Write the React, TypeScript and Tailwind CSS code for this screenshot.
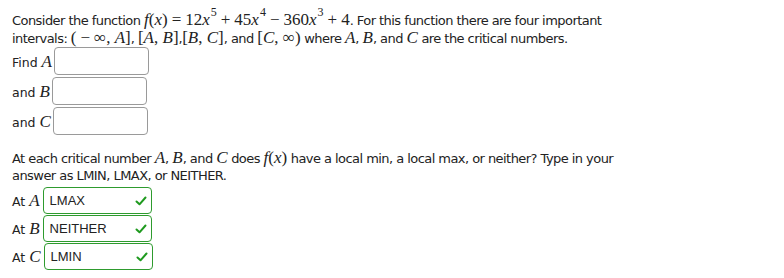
import React from "react";

const V = ({ children }: { children: React.ReactNode }) => <span className="italic">{children}</span>;

const M = ({ children }: { children: React.ReactNode }) => (
  <span className="font-['Liberation_Serif',serif] text-[17px] tracking-normal leading-none">{children}</span>
);

const Op = ({ children }: { children: React.ReactNode }) => <span className="mx-[4px]">{children}</span>;

const Sup = ({ children }: { children: React.ReactNode }) => (
  <sup className="text-[12px] top-[-0.75em] ml-[1px]">{children}</sup>
);

const Check = () => (
  <svg width="12" height="10" viewBox="0 0 12 10" className="shrink-0">
    <path d="M1.5 5.5 L4.5 8.3 L10.5 1.5" fill="none" stroke="#1f9a1f" strokeWidth="2" strokeLinecap="round" strokeLinejoin="round" />
  </svg>
);

const EmptyBox = () => <div className="w-[95px] h-[28px] border border-[#9a9a9a] rounded-[4px] bg-white" />;

const GreenBox = ({ value }: { value: string }) => (
  <div className="w-[109px] h-[27px] border border-[#2e9b2e] rounded-[4px] bg-white flex items-center justify-between pl-[6px] pr-[4px]">
    <span className="font-['Liberation_Sans',Arial,sans-serif] text-[13px] text-[#222] tracking-normal">{value}</span>
    <Check />
  </div>
);

const Label = ({ children }: { children: React.ReactNode }) => (
  <span className="text-[12.5px] tracking-normal leading-none">{children}</span>
);

const Line = ({ children }: { children: React.ReactNode }) => (
  <div className="h-[18px] leading-[18px] whitespace-nowrap">{children}</div>
);

export default function App() {
  return (
    <div className="w-[784px] h-[278px] bg-white text-[#222] font-['DejaVu_Sans','Verdana',sans-serif] text-[13px] tracking-[-0.55px] pl-[12px] pt-[11px]">
      <div>
        <Line>
          Consider the function{" "}
          <M>
            <V>f</V>(<V>x</V>)<Op>=</Op>12<V>x</V>
            <Sup>5</Sup>
            <Op>+</Op>45<V>x</V>
            <Sup>4</Sup>
            <Op>−</Op>360<V>x</V>
            <Sup>3</Sup>
            <Op>+</Op>4
          </M>
          . For this function there are four important
        </Line>
        <Line>
          intervals: <M>(<Op>−</Op>∞, <V>A</V>]</M>, <M>[<V>A</V>, <V>B</V>]</M>,<M>[<V>B</V>, <V>C</V>]</M>, and{" "}
          <M>[<V>C</V>, ∞)</M> where <M><V>A</V></M>, <M><V>B</V></M>, and <M><V>C</V></M> are the critical numbers.
        </Line>
      </div>

      <div className="flex flex-col gap-[2px]">
        <div className="flex items-center gap-[2px] h-[28px]">
          <Label>Find <M><V>A</V></M></Label>
          <EmptyBox />
        </div>
        <div className="flex items-center gap-[2px] h-[28px]">
          <Label>and <M><V>B</V></M></Label>
          <EmptyBox />
        </div>
        <div className="flex items-center gap-[2px] h-[28px]">
          <Label>and <M><V>C</V></M></Label>
          <EmptyBox />
        </div>
      </div>

      <div className="mt-[14px]">
        <Line>
          At each critical number <M><V>A</V></M>, <M><V>B</V></M>, and <M><V>C</V></M> does{" "}
          <M><V>f</V>(<V>x</V>)</M> have a local min, a local max, or neither? Type in your
        </Line>
        <Line>answer as LMIN, LMAX, or NEITHER.</Line>
      </div>

      <div className="flex flex-col gap-[1px] mt-[2px]">
        <div className="flex items-center gap-[3px] h-[27px]">
          <Label>At <M><V>A</V></M></Label>
          <GreenBox value="LMAX" />
        </div>
        <div className="flex items-center gap-[3px] h-[27px]">
          <Label>At <M><V>B</V></M></Label>
          <GreenBox value="NEITHER" />
        </div>
        <div className="flex items-center gap-[3px] h-[27px]">
          <Label>At <M><V>C</V></M></Label>
          <GreenBox value="LMIN" />
        </div>
      </div>
    </div>
  );
}
